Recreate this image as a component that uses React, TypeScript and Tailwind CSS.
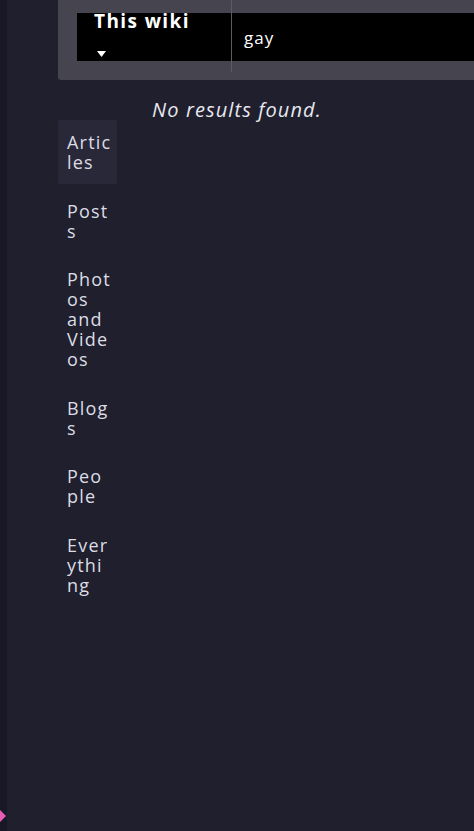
import React from 'react';

const TABS: { lines: string[]; active?: boolean }[] = [
  { lines: ['Artic', 'les'], active: true },
  { lines: ['Post', 's'] },
  { lines: ['Phot', 'os', 'and', 'Vide', 'os'] },
  { lines: ['Blog', 's'] },
  { lines: ['Peo', 'ple'] },
  { lines: ['Ever', 'ythi', 'ng'] },
];

export default function App() {
  return (
    <div className="flex min-h-[831px] w-full bg-[#1f1f2e] font-['Open_Sans',sans-serif] text-[#e4e4ea]">
      <div className="relative w-[7px] shrink-0 bg-[#191926]">
        <div className="absolute left-0 top-[810px] h-0 w-0 border-y-[6px] border-l-[6px] border-y-transparent border-l-[#e85cb8]" />
      </div>

      <div className="flex flex-1 flex-col pl-[51px]">
        <div className="flex h-[80px] items-start rounded-bl-[3px] bg-[#45444f]">
          <div className="ml-[19px] mt-[13px] flex h-[48px] w-[154px] flex-col bg-black pl-[17px]">
            <span className="text-[19px] font-bold leading-[16px] tracking-[1.4px] text-white">This wiki</span>
            <svg className="ml-[3px] mt-[22px] h-[6px] w-[9px]" viewBox="0 0 9 6">
              <path d="M0 0h9L4.5 6z" fill="#fff" />
            </svg>
          </div>
          <div className="h-[72px] w-px bg-[#5b5a66]" />
          <div className="mt-[13px] flex h-[48px] flex-1 items-center bg-black pl-[12px]">
            <span className="text-[17px] leading-none tracking-[1px] text-white">gay</span>
          </div>
        </div>

        <p className="mt-[19px] pr-[58px] text-center text-[20px] italic leading-[22px] tracking-[1.1px] text-[#e8e8ee]">
          No results found.
        </p>

        <ul className="mt-[-1px] flex w-[59px] flex-col gap-[4.6px]">
          {TABS.map((tab) => (
            <li
              key={tab.lines.join('')}
              className={`rounded-[2px] px-[9px] py-[12px] text-[18px] leading-[20px] tracking-[1.2px] text-[#dcdce4] ${
                tab.active ? 'bg-[#282839]' : ''
              }`}
            >
              {tab.lines.map((line) => (
                <span key={line} className="block whitespace-nowrap">
                  {line}
                </span>
              ))}
            </li>
          ))}
        </ul>
      </div>
    </div>
  );
}
